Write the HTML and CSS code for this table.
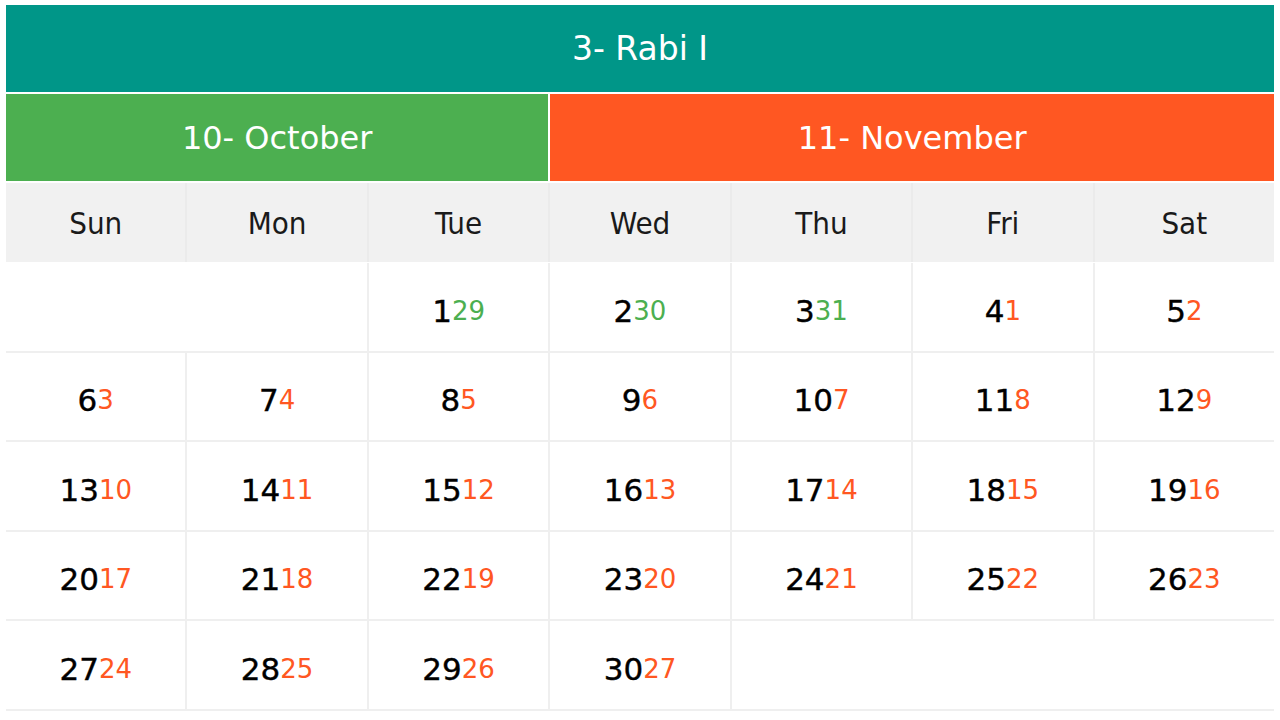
FILE: index.html
```html
<!DOCTYPE html>
<html>
<head>
<meta charset="utf-8">
<link rel="stylesheet" href="styles.css">
</head>
<body>
<div class="cal">
  <div class="title">3- Rabi I</div>
  <div class="months">
    <div class="month oct">10- October</div>
    <div class="month nov">11- November</div>
  </div>
  <div class="weekdays">
    <div class="wd">Sun</div><div class="wd">Mon</div><div class="wd">Tue</div><div class="wd">Wed</div><div class="wd">Thu</div><div class="wd">Fri</div><div class="wd">Sat</div>
  </div>
  <div class="days">
    <div class="day span2"></div>
    <div class="day"><span class="h">1</span><span class="g g-old">29</span></div>
    <div class="day"><span class="h">2</span><span class="g g-old">30</span></div>
    <div class="day"><span class="h">3</span><span class="g g-old">31</span></div>
    <div class="day"><span class="h">4</span><span class="g">1</span></div>
    <div class="day"><span class="h">5</span><span class="g">2</span></div>

    <div class="day"><span class="h">6</span><span class="g">3</span></div>
    <div class="day"><span class="h">7</span><span class="g">4</span></div>
    <div class="day"><span class="h">8</span><span class="g">5</span></div>
    <div class="day"><span class="h">9</span><span class="g">6</span></div>
    <div class="day"><span class="h">10</span><span class="g">7</span></div>
    <div class="day"><span class="h">11</span><span class="g">8</span></div>
    <div class="day"><span class="h">12</span><span class="g">9</span></div>

    <div class="day"><span class="h">13</span><span class="g">10</span></div>
    <div class="day"><span class="h">14</span><span class="g">11</span></div>
    <div class="day"><span class="h">15</span><span class="g">12</span></div>
    <div class="day"><span class="h">16</span><span class="g">13</span></div>
    <div class="day"><span class="h">17</span><span class="g">14</span></div>
    <div class="day"><span class="h">18</span><span class="g">15</span></div>
    <div class="day"><span class="h">19</span><span class="g">16</span></div>

    <div class="day"><span class="h">20</span><span class="g">17</span></div>
    <div class="day"><span class="h">21</span><span class="g">18</span></div>
    <div class="day"><span class="h">22</span><span class="g">19</span></div>
    <div class="day"><span class="h">23</span><span class="g">20</span></div>
    <div class="day"><span class="h">24</span><span class="g">21</span></div>
    <div class="day"><span class="h">25</span><span class="g">22</span></div>
    <div class="day"><span class="h">26</span><span class="g">23</span></div>

    <div class="day"><span class="h">27</span><span class="g">24</span></div>
    <div class="day"><span class="h">28</span><span class="g">25</span></div>
    <div class="day"><span class="h">29</span><span class="g">26</span></div>
    <div class="day"><span class="h">30</span><span class="g">27</span></div>
    <div class="day span3"></div>
  </div>
</div>
</body>
</html>
```
FILE: styles.css
```css
html, body {
  margin: 0;
  padding: 0;
  background: #ffffff;
}
body {
  padding: 5px 6px 0 6px;
  font-family: "DejaVu Sans", "Liberation Sans", sans-serif;
}
.cal {
  width: 1268px;
  display: flex;
  flex-direction: column;
  gap: 2px;
}
.title {
  height: 87px;
  background: #009688;
  color: #ffffff;
  font-size: 33px;
  display: flex;
  align-items: center;
  justify-content: center;
}
.months {
  display: grid;
  grid-template-columns: repeat(7, 1fr);
  gap: 2px;
}
.month {
  height: 87px;
  color: #ffffff;
  font-size: 32px;
  display: flex;
  align-items: center;
  justify-content: center;
}
.oct {
  grid-column: span 3;
  background: #4caf50;
}
.nov {
  grid-column: span 4;
  background: #ff5722;
}
.weekdays {
  display: grid;
  grid-template-columns: repeat(7, 1fr);
  gap: 2px;
  background: #ebebeb;
}
.wd {
  height: 79px;
  background: #f1f1f1;
  color: #1a1a1a;
  font-family: "DejaVu Sans Condensed", "DejaVu Sans", sans-serif;
  font-stretch: semi-condensed;
  font-size: 31px;
  display: flex;
  align-items: center;
  justify-content: center;
}
.days {
  display: grid;
  grid-template-columns: repeat(7, 1fr);
  gap: 2px;
  background: #efefef;
  padding-bottom: 2px;
  margin-top: -1px;
}
.day {
  height: 87.5px;
  background: #ffffff;
  display: flex;
  align-items: center;
  justify-content: center;
  padding-top: 8px;
  box-sizing: border-box;
}
.span2 {
  grid-column: span 2;
}
.span3 {
  grid-column: span 3;
}
.h {
  color: #000000;
  font-size: 31px;
  -webkit-text-stroke: 0.4px #000000;
}
.g {
  color: #ff5722;
  font-size: 26px;
}
.g-old {
  color: #4caf50;
}
```
